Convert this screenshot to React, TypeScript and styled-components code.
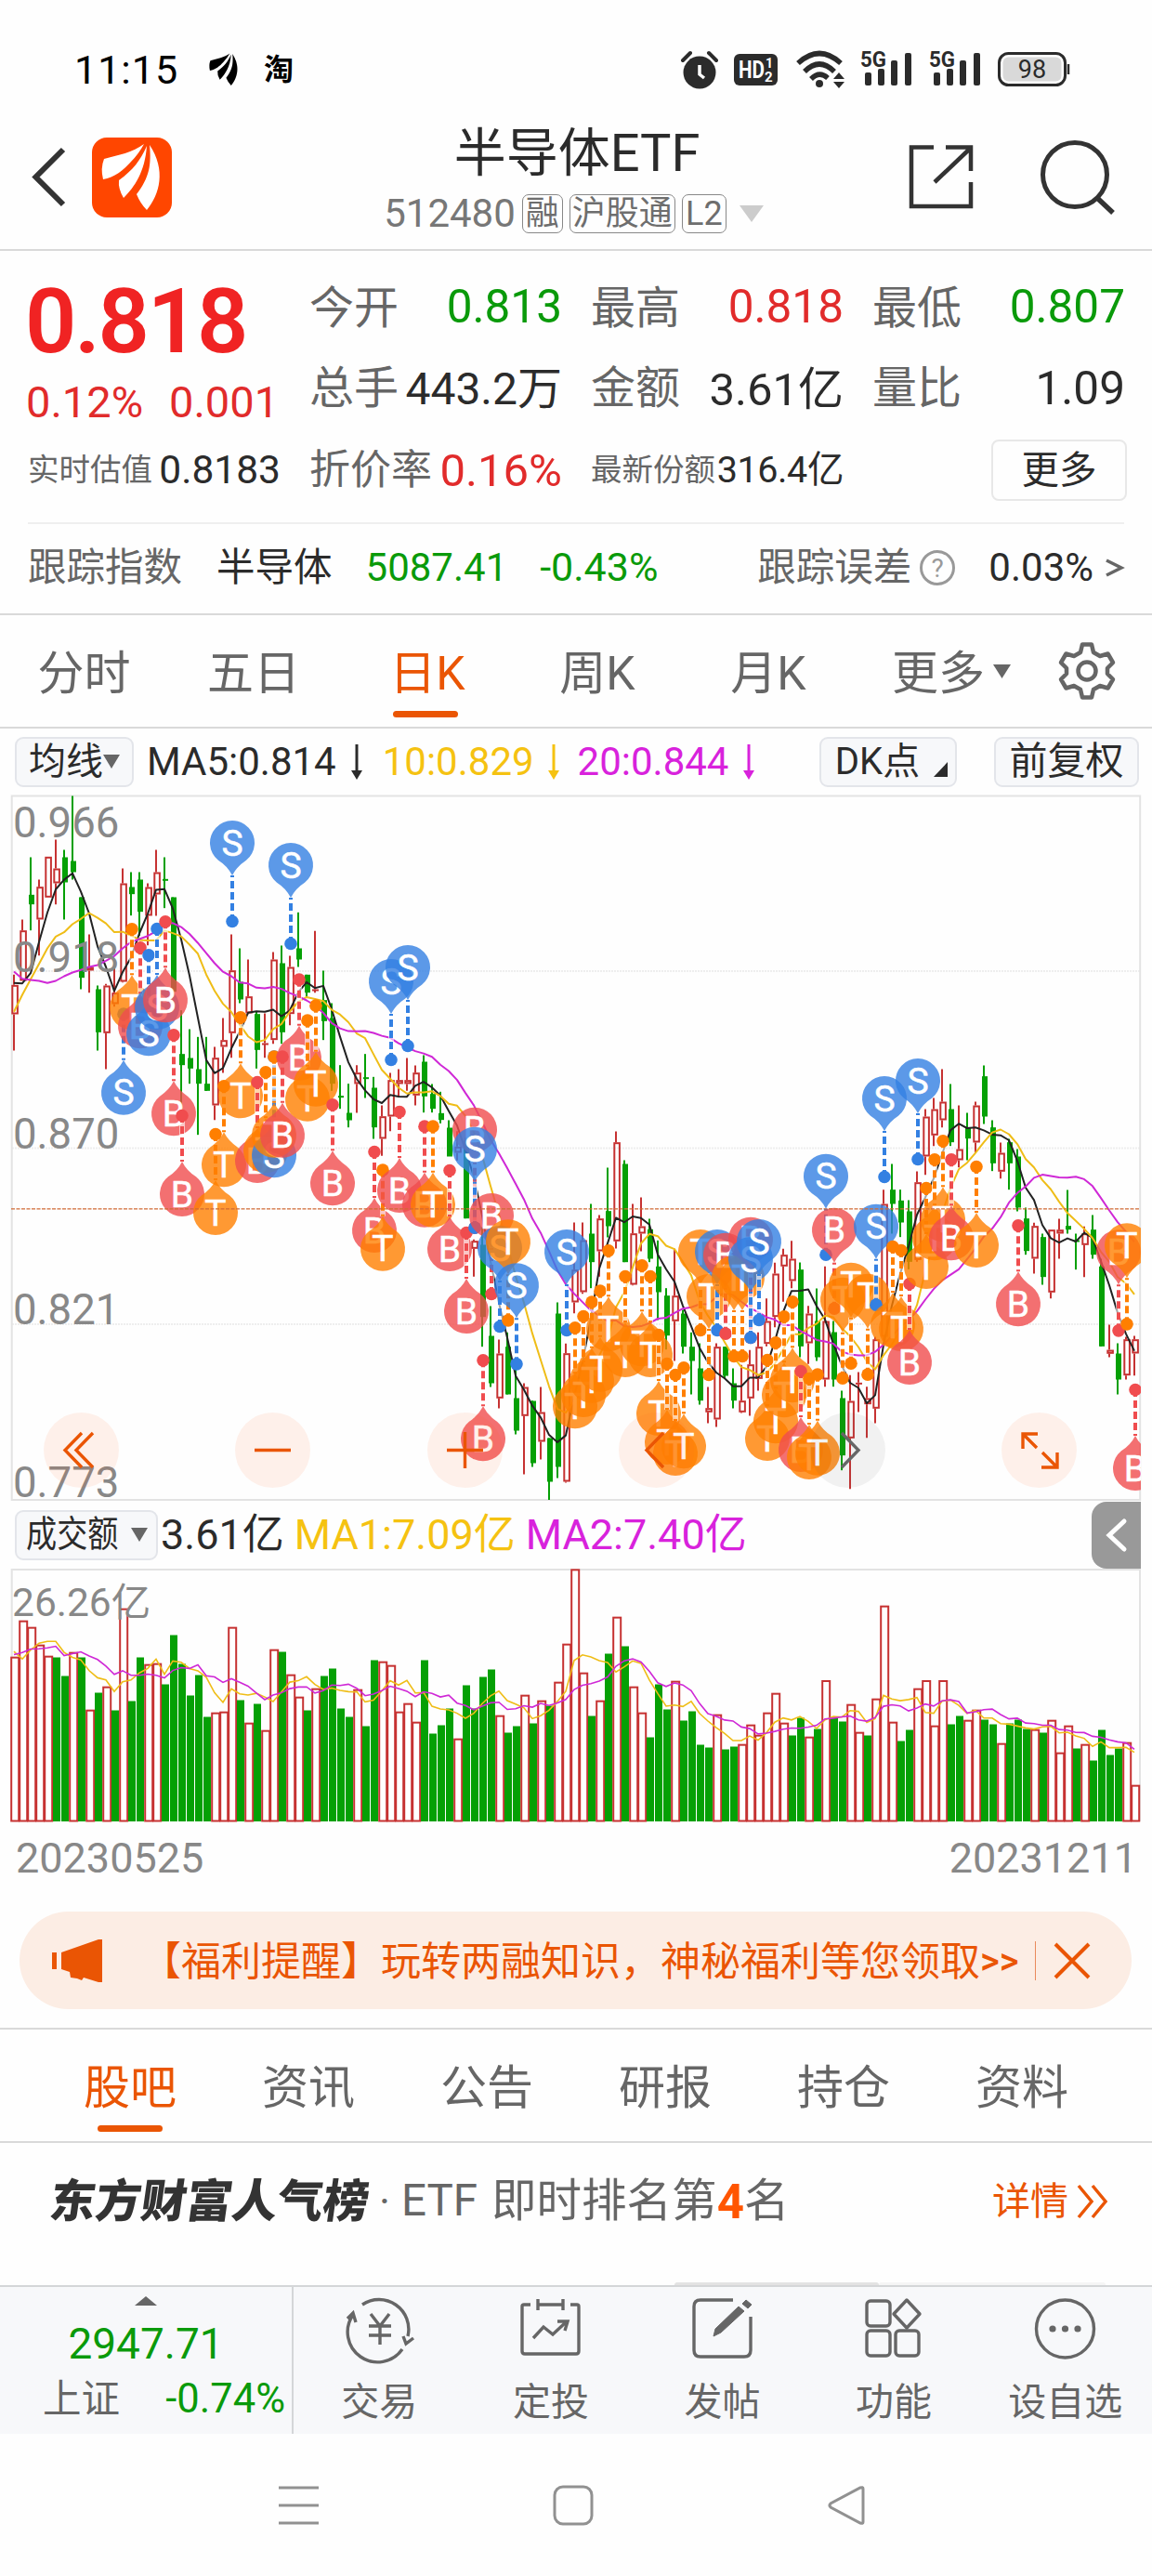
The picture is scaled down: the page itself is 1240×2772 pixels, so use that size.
import React from "react";
import styled, { createGlobalStyle, css } from "styled-components";

const C = {
  ink: "#2b2b2b",
  gray: "#666",
  axis: "#888",
  red: "#e12b2b",
  green: "#0a9a0a",
  orange: "#ea5504",
  yellow: "#f5c211",
  purple: "#d822dc",
  line: "#d9d9d9",
};

const Global = createGlobalStyle`
  * { box-sizing: border-box; }
  body { margin: 0; background: #fff; }
`;

const Screen = styled.div`
  width: 1240px;
  height: 2772px;
  overflow: hidden;
  display: flex;
  flex-direction: column;
  background: #fefefe;
  color: ${C.ink};
  font-family: Roboto, "Noto Sans CJK SC", sans-serif;
  white-space: nowrap;
  svg { display: block; flex: none; overflow: visible; }
  svg text { font-family: Roboto, "Noto Sans CJK SC", sans-serif; }
`;

const Txt = styled.span<{ s: number; c?: string; w?: number; dy?: number; ml?: number; ls?: number }>`
  font-size: ${(p) => p.s}px;
  line-height: 1;
  color: ${(p) => p.c ?? C.ink};
  font-weight: ${(p) => p.w ?? 400};
  margin-left: ${(p) => p.ml ?? 0}px;
  padding-top: ${(p) => p.dy ?? 0}px;
  letter-spacing: ${(p) => p.ls ?? 0}px;
`;

/* ---------- status bar ---------- */

const StatusBar = styled.div`
  height: 110px;
  padding: 40px 88px 0 80px;
  display: flex;
  align-items: center;
`;
const Push = styled.div`flex: 1;`;

const Feather = ({ color }: { color: string }) => (
  <g fill={color}>
    <path d="M56 8C44 17 28 20 13 24Q9 34 12 46C24 44 34 36 42 27Q50 19 56 8Z" />
    <path d="M59 10C52 26 44 36 29 47Q28 56 34 66C46 54 57 38 59 10Z" />
    <path d="M62 9C64 30 62 44 48 62Q52 72 59 79C73 62 80 36 62 9Z" />
  </g>
);

const Signal = () => (
  <svg width="58" height="44" viewBox="0 0 58 44">
    <text x="0" y="19" fontSize="24" fontWeight="700" fill={C.ink} textLength="28" lengthAdjust="spacingAndGlyphs">5G</text>
    <g fill={C.ink}>
      <rect x="5" y="25" width="7" height="14" rx="2" />
      <rect x="19" y="21" width="7" height="18" rx="2" />
      <rect x="33" y="12" width="7" height="27" rx="2" />
      <rect x="48" y="4" width="7" height="35" rx="2" />
    </g>
  </svg>
);

const StatusIcons = styled.div`
  display: flex;
  align-items: center;
  svg + svg { margin-left: 16px; }
  svg:nth-of-type(3) { margin-left: 19px; }
`;

/* ---------- header ---------- */

const Header = styled.div`
  height: 160px;
  border-bottom: 2px solid ${C.line};
  display: flex;
  align-items: flex-start;
  padding: 0 36px 0 34px;
`;
const HeaderSide = styled.div<{ right?: boolean }>`
  width: 230px;
  padding-top: 37px;
  display: flex;
  gap: ${(p) => (p.right ? 70 : 25)}px;
  justify-content: ${(p) => (p.right ? "flex-end" : "flex-start")};
`;
const TitleBox = styled.div`
  flex: 1;
  display: flex;
  flex-direction: column;
  align-items: center;
  padding: 27px 0 0 4px;
`;
const CodeRow = styled.div`
  display: flex;
  align-items: center;
  gap: 7px;
  margin: 15px 0 0 -2px;
  height: 44px;
`;
const Tag = styled.span<{ w: number }>`
  width: ${(p) => p.w}px;
  height: 42px;
  border: 1.5px solid #888;
  border-radius: 7px;
  display: flex;
  align-items: center;
  justify-content: center;
  font-size: 36px;
  line-height: 1;
  color: #6e6e6e;
`;

/* ---------- quote ---------- */

const Quote = styled.div`
  height: 292px;
  padding: 0 30px;
  display: grid;
  grid-template-columns: 272px repeat(3, 272px);
  column-gap: 31px;
`;
const QuoteCol = styled.div`
  padding-top: 16px;
  display: flex;
  flex-direction: column;
`;
const Cell = styled.div`
  height: 88px;
  display: flex;
  align-items: center;
  justify-content: space-between;
`;
const PriceBlock = styled.div`
  height: 176px;
  margin-left: -3px;
  display: flex;
  flex-direction: column;
  justify-content: flex-start;
`;
const Row = styled.div`
  display: flex;
  align-items: center;
`;
const MoreButton = styled.div`
  width: 146px;
  height: 66px;
  margin: 0 -2px 0 auto;
  border: 2px solid #e8e8e8;
  border-radius: 8px;
  display: flex;
  align-items: center;
  justify-content: center;
`;
const TrackRow = styled.div`
  height: 98px;
  margin: 0 30px;
  padding-bottom: 3px;
  border-top: 2px solid #efefef;
  display: flex;
  align-items: center;
`;

/* ---------- period tabs ---------- */

const TabBar = styled.div<{ h: number }>`
  height: ${(p) => p.h}px;
  border-top: 2px solid ${C.line};
  border-bottom: 2px solid ${C.line};
  display: flex;
`;
const Tab = styled.div<{ w: number; on?: boolean; bar?: number }>`
  width: ${(p) => p.w}px;
  display: flex;
  flex-direction: column;
  align-items: center;
  justify-content: flex-end;
  padding-bottom: 10px;
  font-size: 50px;
  line-height: 50px;
  color: ${(p) => (p.on ? C.orange : C.gray)};
  &::after {
    content: "";
    width: 70px;
    height: 7px;
    margin-top: 15px;
    border-radius: 4px;
    background: ${(p) => (p.on ? C.orange : "transparent")};
    ${(p) => p.bar && css`margin-right: ${p.bar}px;`}
  }
`;
const TabTools = styled(Row)`
  margin-left: -28px;
  gap: 50px;
`;

/* ---------- indicator rows ---------- */

const IndicatorRow = styled.div<{ h: number }>`
  height: ${(p) => p.h}px;
  padding: 0 14px 0 16px;
  display: flex;
  align-items: center;
`;
const Chip = styled.div<{ w: number; pl?: number; mr?: number }>`
  width: ${(p) => p.w}px;
  height: 54px;
  flex: none;
  padding-left: ${(p) => p.pl ?? 0}px;
  margin-right: ${(p) => p.mr ?? 0}px;
  border: 2px solid #e3e5ea;
  border-radius: 9px;
  background: #f7f8fa;
  display: flex;
  align-items: center;
  justify-content: center;
`;
const Narrow = styled.span`
  display: inline-block;
  width: 100px;
  margin-right: 13px;
  font-size: 39px;
  line-height: 1;
  transform: scaleX(0.85);
  transform-origin: left center;
`;
const Down = ({ color = C.gray, w = 18 }: { color?: string; w?: number }) => (
  <svg width={w} height="15" viewBox="0 0 18 15" preserveAspectRatio="none"><path d="M0 0H18L9 15Z" fill={color} /></svg>
);
const ArrowSvg = styled.svg<{ ml: number; mr: number }>`
  margin: 0 ${(p) => p.mr}px 0 ${(p) => p.ml}px;
`;
const ArrowDown = ({ color, ml, mr }: { color: string; ml: number; mr: number }) => (
  <ArrowSvg width="14" height="38" viewBox="0 0 14 38" ml={ml} mr={mr}>
    <path d="M7 0V34" stroke={color} strokeWidth="3" />
    <path d="M1 28H13L7 38Z" fill={color} />
  </ArrowSvg>
);

const CollapseTab = styled.div`
  width: 53px;
  height: 72px;
  margin-left: auto;
  margin-right: -2px;
  border-radius: 16px 0 0 16px;
  background: #999;
  display: flex;
  align-items: center;
  justify-content: center;
`;

/* ---------- price chart ---------- */

type Candle = ["r" | "g", number, number, number, number];
// colour, high, low, body top, body bottom (thirds of a pixel)
const candles: Candle[] = [
  ["r",625,870,658,753],["r",447,645,482,645],["g",246,482,367,398],["r",318,563,341,447],["r",244,376,244,376],
  ["r",189,398,282,330],["g",222,447,246,327],["g",48,318,258,294],["g",375,672,375,635],["r",495,683,600,612],
  ["g",660,870,672,811],["r",655,930,660,814],["r",600,728,683,720],["r",282,650,330,648],["g",294,434,342,365],
  ["g",294,500,318,422],["r",330,530,342,435],["r",222,435,294,366],["g",246,410,316,320],["g",375,700,375,680],
  ["g",740,1080,881,917],["g",801,977,894,928],["g",826,1142,930,977],["g",826,1000,977,1000],["r",858,1094,893,1047],
  ["r",765,942,836,858],["r",495,893,611,814],["g",540,717,648,705],["r",576,752,695,750],["g",745,928,752,868],
  ["r",750,893,846,850],["r",552,848,576,836],["g",531,848,588,811],["r",564,788,600,752],["g",424,600,540,576],
  ["g",625,700,625,683],["r",484,683,672,676],["g",612,836,707,775],["g",717,1000,765,977],["g",917,1058,1016,1020],
  ["g",977,1118,1071,1095],["r",917,1071,941,978],["g",881,1023,956,961],["g",955,1155,990,1118],["r",1047,1210,1082,1155],
  ["r",942,1130,965,1083],["r",930,1020,965,978],["r",894,1000,965,978],["r",918,1047,941,1015],["g",885,1070,906,1018],
  ["g",978,1070,1010,1058],["g",1003,1105,1072,1094],["g",1095,1210,1119,1212],["r",1130,1225,1180,1200],["g",1150,1412,1160,1412],
  ["r",1480,1600,1484,1510],["g",1440,1826,1497,1730],["g",1695,1956,1791,1944],["r",1803,2025,1848,1993],["g",1780,1980,1826,1980],
  ["g",1895,2109,1992,2097],["r",1944,2238,1956,2050],["g",2000,2214,2001,2202],["r",1956,2190,2037,2133],["g",2121,2322,2121,2262],
  ["g",1683,2250,1719,2214],["r",1816,2265,1847,2262],["r",1425,1718,1577,1683],["r",1425,1655,1482,1650],["g",1365,1637,1461,1553],
  ["r",1401,1600,1412,1518],["g",1248,1473,1388,1437],["r",1131,1509,1166,1486],["g",1224,1553,1236,1553],["r",1365,1628,1460,1626],
  ["r",1344,1518,1437,1461],["g",1413,1553,1447,1542],["g",1483,1740,1567,1650],["g",1637,1835,1661,1790],["r",1510,1872,1661,1744],
  ["g",1707,1848,1719,1826],["g",1780,1980,1826,1872],["g",1815,2013,1896,2000],["r",1956,2073,2024,2038],["r",1815,2085,1826,2061],
  ["g",1826,1930,1826,1920],["g",1896,2025,1944,2000],["r",1885,2040,2000,2038],["r",1837,2049,1883,1993],["r",1780,1968,1826,1930],
  ["r",1670,1825,1743,1817],["r",1555,1763,1590,1730],["r",1510,1681,1529,1567],["r",1484,1637,1542,1614],["g",1554,1860,1577,1825],
  ["r",1694,1882,1719,1815],["g",1638,1872,1743,1860],["r",1567,1955,1743,1932],["g",1743,1955,1779,1932],["g",1968,2225,1992,2177],
  ["r",1918,2285,2001,2122],["r",1908,2037,1942,1947],["r",1955,2120,1992,2012],["r",1794,2073,1802,2026],["r",1319,1805,1365,1794],
  ["g",1236,1461,1319,1365],["g",1319,1472,1354,1425],["g",1353,1576,1389,1552],["r",1260,1552,1295,1546],["r",1059,1271,1083,1212],
  ["r",1023,1178,1059,1144],["r",930,1118,1035,1095],["g",978,1178,1059,1166],["r",1047,1247,1188,1224],["g",1071,1224,1118,1154],
  ["r",1035,1200,1047,1167],["g",918,1107,953,1083],["g",1095,1259,1118,1234],["r",1167,1283,1200,1261],["g",1155,1319,1166,1234],
  ["g",1188,1389,1212,1377],["g",1377,1529,1412,1517],["r",1426,1590,1436,1542],["g",1461,1626,1472,1601],["r",1448,1670,1448,1651],
  ["r",1413,1542,1448,1461],["g",1320,1461,1436,1448],["g",1461,1577,1482,1487],["r",1438,1601,1460,1498],["g",1401,1542,1448,1529],
  ["g",1542,1825,1567,1825],["r",1755,1860,1836,1849],["g",1815,1980,1848,1932],["r",1794,1932,1802,1919],["r",1791,1919,1802,1848],
];

type Mark = ["S" | "B" | "T", number, number, 1 | -1, number?];
// letter, day, dot height, side of the pin, extra distance when two share a day
const marks: Mark[] = [
  ["S",13,752,1],["T",14,478,1],["B",15,538,1],["S",16,562,1],["S",17,477,1],["B",18,454,1],["B",19,820,1],["B",20,1080,1],
  ["T",24,1140,1],["T",25,985,1],["S",26,453,-1],["T",27,763,1],["B",29,972,1],["T",30,940,1],["S",31,890,1,65],["T",31,890,1],
  ["B",32,890,1],["S",33,525,-1],["B",34,641,1],["T",35,773,1],["T",36,725,1],["B",38,1045,1],["B",43,1197,1],["T",44,1256,1],
  ["S",45,900,-1],["B",46,1068,1],["S",47,855,-1],["B",49,1115,1],["T",50,1115,1],["B",52,1257,1],["B",54,1458,1],
  ["B",55,1442,-1,63],["S",55,1442,-1],["B",56,1870,1],["B",57,1656,-1],["S",58,1761,-1],["T",59,1741,-1],["S",60,1882,-1],
  ["S",66,1773,-1],["T",67,1765,1],["T",68,1728,1],["T",69,1682,1],["T",70,1646,1],["T",71,1516,1],["T",73,1599,1],["T",75,1564,1],
  ["T",76,1599,1],["T",77,1788,1],["T",78,1881,1],["T",79,1917,1],["T",80,1894,1],["T",82,1773,-1],["T",83,1917,-1],["S",84,1773,-1],
  ["B",85,1784,-1],["T",86,1857,-1],["T",87,1857,-1],["B",88,1797,-1,64],["S",88,1797,-1],["S",89,1740,-1],["T",90,1869,1],
  ["T",91,1813,1],["T",92,1729,1],["T",93,1681,1],["B",94,1905,1],["T",95,1929,1],["T",96,1916,1],["S",97,1529,-1],["B",98,1703,-1],
  ["T",99,1928,-1],["T",100,1880,-1],["T",102,1916,-1],["S",103,1691,-1],["S",104,1278,-1],["T",105,1503,1],["T",106,1515,1],
  ["B",107,1623,1],["S",108,1221,-1],["T",109,1314,1],["T",110,1222,1],["T",111,1162,1],["B",112,1222,1],["T",115,1245,1],
  ["B",120,1435,1],["B",132,1774,-1],["T",133,1753,-1],["B",134,1965,1],
];
const markColor = { S: "#3380e2", B: "#f04c4e", T: "#ff7f00" };

const toX = (i: number) => 16 + 9 * i;
const toY = (v: number) => v / 3 - 14.5;

/** Moving average whose first points, before the window is full, are given. */
const average = (values: number[], n: number, lead: number[]) =>
  values.map((_, i) =>
    i < lead.length ? lead[i] : values.slice(i - n + 1, i + 1).reduce((a, b) => a + b, 0) / n
  );
const path = (vals: number[], f: (v: number) => number) =>
  vals.map((v, i) => `${i ? "L" : "M"}${toX(i) - 1} ${f(v).toFixed(1)}`).join("");

const closes = candles.map((c) => (c[0] === "r" ? c[3] : c[4]));
const ma5 = average(closes, 5, [652, 653, 620, 520]);
const ma10 = average(closes, 10, [745, 690, 640, 590, 540, 502, 488, 462, 445]);
const ma20 = average(closes, 20, [615,638,642,645,652,645,630,618,610,600,594,580,565,540,520,510,500,485,462]);

const CandleShape = ({ c, i }: { c: Candle; i: number }) => {
  const [k, hi, lo, top, bot] = c;
  const x = toX(i);
  const t = toY(top);
  const b = toY(bot);
  if (k === "g")
    return (
      <g fill="#05a005">
        <rect x={x - 2} y={toY(hi)} width="2" height={toY(lo) - toY(hi)} />
        <rect x={x - 3} y={t} width="6" height={Math.max(2, b - t)} />
      </g>
    );
  return (
    <g stroke="#c63232" strokeWidth="2" fill="none">
      <path d={`M${x - 1} ${toY(hi)}V${t}M${x - 1} ${b}V${toY(lo)}`} />
      {bot - top < 7 ? <path d={`M${x - 4} ${t + 1}H${x + 3}`} /> : <rect x={x - 2.7} y={t + 1} width="5.6" height={Math.max(1, b - t - 2)} />}
    </g>
  );
};

const MarkShape = ({ m }: { m: Mark }) => {
  const [k, day, dot, dir, extra = 0] = m;
  const x = toX(day);
  const y = toY(dot);
  const cy = y + dir * (84.5 + extra / 3);
  const tip = cy - dir * 35;
  const col = markColor[k];
  return (
    <g>
      <path d={`M${x} ${tip}V${y}`} stroke="#fff" strokeOpacity="0.6" strokeWidth="6" />
      <path d={`M${x} ${tip}V${y}`} stroke={col} strokeWidth="4" strokeDasharray="8 4" strokeDashoffset="6" />
      <circle cx={x} cy={y} r="6.8" fill={col} />
      <path
        transform={`translate(${x} ${cy}) scale(1 ${-dir})`}
        d="M-15 18.7Q-5 25 0 35Q5 25 15 18.7A24 24 0 1 0 -15 18.7Z"
        fill={col}
        fillOpacity="0.8"
      />
      <text x={x} y={cy + 13.8} fontSize="39" fill="#fff" stroke="#fff" strokeWidth="0.5" textAnchor="middle">{k}</text>
    </g>
  );
};

const ChartBox = styled.div`
  position: relative;
  height: 760px;
`;
const ToolButtons = styled.div`
  position: absolute;
  left: 47px;
  bottom: 14px;
  display: flex;
  gap: 125.3px;
`;
const ToolButton = styled.div<{ off?: boolean }>`
  width: 81px;
  height: 81px;
  border-radius: 50%;
  background: ${(p) => (p.off ? "rgba(90,90,90,.08)" : "rgba(255,96,30,.09)")};
  svg { fill: none; stroke: ${(p) => (p.off ? "#666" : C.orange)}; stroke-width: 3.4; }
`;
const toolIcons = [
  "M41 22L23 40.5L41 59M53 22L35 40.5L53 59",
  "M21 40.5H60",
  "M21 40.5H60M40.5 21V60",
  "M48 22L30 40.5L48 59",
  "M34 22L52 40.5L34 59",
  "M39 23H23V39M23 23L38 38M43 59H60V43M60 59L44 43",
];

const PriceChart = () => (
  <ChartBox>
    <svg width="1240" height="760" viewBox="0 0 1240 760">
      <defs><clipPath id="plot"><rect x="12" y="1" width="1216" height="758" /></clipPath></defs>
      <g stroke="#eee" strokeWidth="2" strokeDasharray="2 1">
        <path d="M13 190H1227M13 380.500H1227M13 570H1227" />
      </g>
      <rect x="12.700" y="1.500" width="1214.500" height="757.500" fill="none" stroke="#e3e3e3" strokeWidth="2" />
      <g clipPath="url(#plot)">
        {candles.map((c, i) => <CandleShape key={i} c={c} i={i} />)}
        <g fill="none" strokeWidth="2" strokeLinejoin="round">
          <path d={path(ma5, toY)} stroke="#222" />
          <path d={path(ma10, toY)} stroke="#efbd17" />
          <path d={path(ma20, toY)} stroke="#cf28d6" />
        </g>
        <g fill={C.axis} fontSize="45.5">
          <text x="14" y="45.5">0.966</text>
          <text x="14" y="190.500">0.918</text>
          <text x="14" y="381">0.870</text>
          <text x="14" y="570">0.821</text>
          <text x="14" y="756">0.773</text>
        </g>
        {marks.map((m, i) => <MarkShape key={i} m={m} />)}
        <path d="M12 445.800H1227" stroke="#cf6a35" strokeWidth="1.300" strokeDasharray="4 1.500" />
      </g>
    </svg>
    <ToolButtons>
      {toolIcons.map((d, i) => (
        <ToolButton key={i} off={i === 4}><svg width="81" height="81"><path d={d} /></svg></ToolButton>
      ))}
    </ToolButtons>
  </ChartBox>
);

/* ---------- volume chart ---------- */

const volumes = (
  "r518 r401 r422 r479 r515 g519 g579 r503 g519 r689 g633 r614 g690 r362 g660 g519 r542 r539 g606 g447 g540 g642 g576 g711 r698 " +
  "r695 r422 g657 r731 g669 r755 r494 g501 r575 r647 g690 r620 g579 g555 g684 g711 r623 g741 g528 r533 r545 r695 r668 r728 g528 " +
  "g765 g738 g684 r782 g609 g684 g582 g558 r707 g762 g741 r641 g732 r659 g675 r599 r476 r235 r569 g708 r659 g507 r389 g483 r614 " +
  "r698 g777 g606 g687 r596 g723 g693 g801 g810 r704 g816 g807 r800 r737 r770 r698 r635 r731 g771 g714 r776 g750 r594 g714 g726 " +
  "r671 r761 g771 r653 r353 r728 g789 g753 r620 r594 r740 r594 g735 g708 r722 r689 g720 g735 r797 g732 g720 g750 r752 g762 r722 " +
  "r827 r740 g813 r800 g852 g753 g834 g813 r794 r932"
).split(" ").map((s) => ({ up: s[0] === "r", top: Number(s.slice(1)) }));
const volTops = volumes.map((v) => v.top);
const volY = (v: number) => (v - 234) / 3 + 0.5;

const VolumeChart = () => (
  <svg width="1240" height="274" viewBox="0 0 1240 274">
    <path d="M12.700 272V1H1227V272" fill="none" stroke="#e3e3e3" strokeWidth="2" />
    {volumes.map((v, i) => {
      const x = toX(i);
      const y = volY(v.top);
      return v.up ? (
        <rect key={i} x={x - 3.8} y={y + 0.5} width="8" height={271 - y} fill="#fff" stroke="#c63232" strokeWidth="2" />
      ) : (
        <rect key={i} x={x - 4} y={y} width="8" height={272 - y} fill="#05a005" />
      );
    })}
    <g fill="none" strokeWidth="1.600">
      <path d={path(average(volTops, 5, [500, 524, 495, 473]), volY)} stroke="#efbd17" />
      <path d={path(average(volTops, 10, [510, 503, 492, 491, 488, 483, 513, 507, 501]), volY)} stroke="#cf28d6" />
    </g>
    <text x="13" y="51" fontSize="42.5" fill={C.axis}>26.26亿</text>
  </svg>
);

const Dates = styled.div`
  height: 84px;
  padding: 15px 16px 0 17px;
  display: flex;
  justify-content: space-between;
`;

/* ---------- banner, content tabs, ranking ---------- */

const Banner = styled.div`
  height: 105px;
  margin: 11px 22px 20px 21px;
  padding: 0 44px 0 35px;
  border-radius: 53px;
  background: #fcede4;
  display: flex;
  align-items: center;
`;
const BannerLine = styled.i`
  width: 2px;
  height: 42px;
  margin: 0 20px 0 17px;
  background: #e98a5c;
`;
const ContentTabs = styled(TabBar)`
  padding: 0 43px 0 44px;
`;
const RankRow = styled.div`
  height: 128px;
  padding: 0 46px 2px 54px;
  display: flex;
  align-items: center;
`;
const RankTitle = styled.span`
  font-size: 49px;
  line-height: 1;
  font-weight: 900;
  color: #333;
  transform: skewX(-8deg);
`;
const Peek = styled.div`
  height: 25px;
  padding: 22px 0 0 726px;
  display: flex;
  align-items: flex-start;
`;
const PeekPill = styled.i<{ w: number; c: string }>`
  width: ${(p) => p.w}px;
  height: 3px;
  border-radius: 6px 6px 0 0;
  background: ${(p) => p.c};
`;

/* ---------- bottom bar ---------- */

const BottomBar = styled.div`
  height: 160px;
  border-top: 2px solid #d4d6d8;
  background: #f7f8fa;
  display: flex;
`;
const IndexBox = styled.div`
  width: 316px;
  border-right: 2px solid #d4d6d8;
  display: flex;
  flex-direction: column;
  align-items: center;
  padding: 10px 0 0;
`;
const IndexRow = styled.div`
  width: 100%;
  padding: 0 7px 0 46px;
  display: flex;
  justify-content: space-between;
  align-items: center;
  margin-top: 15px;
`;
const Action = styled.div`
  width: 184.6px;
  display: flex;
  flex-direction: column;
  align-items: center;
  padding-top: 7px;
  gap: 21px;
  font-size: 41px;
  line-height: 41px;
  color: ${C.gray};
  svg { fill: none; stroke: ${C.gray}; stroke-width: 3.4; }
`;
const NavBar = styled.div`
  flex: 1;
  padding: 54px 307px 0 300px;
  display: flex;
  justify-content: space-between;
  svg { fill: none; stroke: #919191; stroke-width: 3; }
`;

const dot = (x: number) => <circle cx={x} cy="38" r="3.600" fill={C.gray} stroke="none" />;
const actions: [string, React.ReactNode][] = [
  ["交易", <>
    <path d="M20 12A32 32 0 0 1 69 46M63 60A32 32 0 0 1 10 23M4 27L10 21L13 31M64 46L67 54L75 48" />
    <path d="M29 22L39 35L49 22M39 35V55M27 35H51M27 45H51" />
  </>],
  ["定投", <>
    <path d="M17 12H10Q8 12 8 14V62Q8 65 11 65H66Q69 65 69 62V14Q69 12 67 12H60M25 12H52M25 6V18M52 6V18" />
    <path d="M20 48L31 36L41 44L55 31M46 30H57L54 40" />
  </>],
  ["发帖", <>
    <path d="M50 7H15Q8 7 8 14V61Q8 68 15 68H62Q69 68 69 61V25" />
    <path d="M29 46L31 38L56 14L62 19L37 42ZM60 11L64 7L70 12L66 16Z" fill={C.gray} strokeWidth="1" />
  </>],
  ["功能", <>
    <rect x="9" y="8" width="25" height="27" rx="4" />
    <rect x="9" y="40" width="25" height="27" rx="4" />
    <rect x="40" y="40" width="25" height="27" rx="4" />
    <path d="M52 7L66 22L52 37L38 22Z" strokeLinejoin="round" />
  </>],
  ["设自选", <><circle cx="38.500" cy="38" r="31" />{dot(25)}{dot(38.5)}{dot(52)}</>],
];

const stats: [string, string, string, number][][] = [
  [["今开", "0.813", C.green, 49.5], ["总手", "443.2万", C.ink, 48]],
  [["最高", "0.818", C.red, 49.5], ["金额", "3.61亿", C.ink, 49]],
  [["最低", "0.807", C.green, 49.5], ["量比", "1.09", C.ink, 49.5]],
];
const thirdRow = [
  <Cell key="a"><Txt s={44} c={C.gray}>折价率</Txt><Txt s={49} c={C.red}>0.16%</Txt></Cell>,
  <Cell key="b"><Txt s={33.5} c={C.gray}>最新份额</Txt><Txt s={39.5} ls={-0.4}>316.4亿</Txt></Cell>,
  <Cell key="c"><MoreButton><Txt s={40.5}>更多</Txt></MoreButton></Cell>,
];

const Help = styled.svg`margin: 0 35px 0 8px;`;
const Chevron = styled.svg`margin-left: 11px;`;
const StatusLogo = styled.svg`margin-left: 32px;`;
const Corner = styled.svg`margin-left: 15px;`;
const More = styled.svg`margin-left: 8px;`;

export default function App() {
  return (
    <Screen>
      <Global />
      <StatusBar>
        <Txt s={43} c="#000" ls={1}>11:15</Txt>
        <StatusLogo width="34" height="38" viewBox="8 6 70 76"><Feather color="#000" /></StatusLogo>
        <Txt s={32} c="#000" w={700} ml={26}>淘</Txt>
        <Push />
        <StatusIcons>
          <svg width="42" height="44" viewBox="0 0 42 44">
            <circle cx="21" cy="25" r="17.500" fill={C.ink} />
            <path d="M3 12L11 4M39 12L31 4" stroke={C.ink} strokeWidth="4" strokeLinecap="round" />
            <path d="M21 17V27L26 31" stroke="#fff" strokeWidth="3.500" fill="none" />
          </svg>
          <svg width="47" height="34" viewBox="0 0 47 34">
            <rect width="47" height="34" rx="6" fill={C.ink} />
            <text x="5" y="26" fontSize="25" fontWeight="700" fill="#fff" textLength="28" lengthAdjust="spacingAndGlyphs">HD</text>
            <text x="34" y="15" fontSize="14" fontWeight="700" fill="#fff">1</text>
            <text x="33" y="30" fontSize="15" fontWeight="700" fill="#fff">2</text>
          </svg>
          <svg width="54" height="44" viewBox="0 0 54 44">
            <g stroke={C.ink} strokeWidth="5.500" fill="none">
              <path d="M3 15Q26 -6 49 15M10 24Q26 8 42 24M17 32Q26 23 35 31" />
            </g>
            <circle cx="26" cy="37" r="4" fill={C.ink} />
            <path d="M41 32L47 25L53 32ZM41 35H53L47 42Z" fill={C.ink} />
          </svg>
          <Signal />
          <Signal />
          <svg width="78" height="38" viewBox="0 0 78 38">
            <rect x="1.500" y="1.500" width="71" height="34" rx="10" fill="#fff" stroke={C.ink} strokeWidth="3" />
            <rect x="5.500" y="5.500" width="63" height="26" rx="6" fill="#d9d9d9" />
            <path d="M76 13V24" stroke={C.ink} strokeWidth="2.500" />
            <text x="37" y="28" fontSize="27" textAnchor="middle" fill={C.ink}>98</text>
          </svg>
        </StatusIcons>
      </StatusBar>

      <Header>
        <HeaderSide>
          <svg width="40" height="86" viewBox="0 0 40 86"><path d="M34 14L4.500 43.500L34 73" fill="none" stroke="#333" strokeWidth="6" /></svg>
          <svg width="86" height="88" viewBox="0 0 86 88">
            <rect y="1" width="86" height="86" rx="16" fill="#ff4600" />
            <Feather color="#fff" />
          </svg>
        </HeaderSide>
        <TitleBox>
          <Txt s={56}>半导体ETF</Txt>
          <CodeRow>
            <Txt s={42} c="#777">512480</Txt>
            <Tag w={44}>融</Tag>
            <Tag w={114}>沪股通</Tag>
            <Tag w={48}>L2</Tag>
            <svg width="38" height="18" viewBox="0 0 38 18"><path d="M7 0H33L20 18Z" fill="#ccc" /></svg>
          </CodeRow>
        </TitleBox>
        <HeaderSide right>
          <svg width="70" height="86" viewBox="0 0 70 86">
            <path d="M27 12.500H3V76H67V50M67 38V12.500H40M66 14L28 50" transform="translate(0 -1)" fill="none" stroke="#333" strokeWidth="4.500" />
          </svg>
          <svg width="86" height="86" viewBox="0 0 86 86">
            <circle cx="39" cy="41" r="34.500" fill="none" stroke="#333" strokeWidth="5" />
            <path d="M63 66L80 82" stroke="#333" strokeWidth="5.500" />
          </svg>
        </HeaderSide>
      </Header>

      <Quote>
        <QuoteCol>
          <PriceBlock>
            <Txt s={97} c="#f02323" w={600} dy={12} ls={-2.2}>0.818</Txt>
            <Row>
              <Txt s={47} c={C.red} dy={14} ml={1}>0.12%</Txt>
              <Txt s={47} c={C.red} dy={14} ml={28}>0.001</Txt>
            </Row>
          </PriceBlock>
          <Cell><Txt s={33.5} c={C.gray}>实时估值</Txt><Txt s={42.5}>0.8183</Txt></Cell>
        </QuoteCol>
        {stats.map((col, i) => (
          <QuoteCol key={i}>
            {col.map(([label, value, color, size], j) => (
              <Cell key={label}>
                <Txt s={48} c={C.gray} dy={j ? 0 : 3}>{label}</Txt>
                <Txt s={size} c={color} dy={2}>{value}</Txt>
              </Cell>
            ))}
            {thirdRow[i]}
          </QuoteCol>
        ))}
      </Quote>
      <TrackRow>
        <Txt s={41.5} c={C.gray}>跟踪指数</Txt>
        <Txt s={41.5} ml={37}>半导体</Txt>
        <Txt s={42} ml={36} c={C.green}>5087.41</Txt>
        <Txt s={43} ml={35} c={C.green}>-0.43%</Txt>
        <Push />
        <Txt s={41.5} c={C.gray}>跟踪误差</Txt>
        <Help width="40" height="40" viewBox="0 0 40 40">
          <circle cx="20" cy="20" r="17.500" fill="none" stroke="#999" strokeWidth="3" />
          <text x="20" y="30" fontSize="28" textAnchor="middle" fill="#999">?</text>
        </Help>
        <Txt s={42}>0.03%</Txt>
        <Chevron width="22" height="20" viewBox="0 0 22 20"><path d="M3 2L19 10L3 18" fill="none" stroke={C.gray} strokeWidth="3.500" /></Chevron>
      </TrackRow>

      <TabBar h={124}>
        <Tab w={181}>分时</Tab>
        <Tab w={184}>五日</Tab>
        <Tab w={190} on bar={4}>日K</Tab>
        <Tab w={176}>周K</Tab>
        <Tab w={192}>月K</Tab>
        <Tab w={174}>更多</Tab>
        <TabTools>
          <Down w={19} />
          <svg width="64" height="64" viewBox="0 0 64 64">
            <path
              d="M27 3.500H37L39 12L46 16L54.500 13.500L60 23L54 29V35L60 41L54.500 50.500L46 48L39 52L37 60.500H27L25 52L18 48L9.500 50.500L4 41L10 35V29L4 23L9.500 13.500L18 16L25 12Z"
              fill="none" stroke={C.gray} strokeWidth="4.500" strokeLinejoin="round"
            />
            <circle cx="32" cy="32" r="9.500" fill="none" stroke={C.gray} strokeWidth="4.500" />
          </svg>
        </TabTools>
      </TabBar>

      <IndicatorRow h={71}>
        <Chip w={128}><Txt s={40}>均线</Txt><Down /></Chip>
        <Txt s={42} ml={14}>MA5:0.814</Txt>
        <ArrowDown color={C.ink} ml={15} mr={21} />
        <Txt s={42} c={C.yellow}>10:0.829</Txt>
        <ArrowDown color={C.yellow} ml={14} mr={19} />
        <Txt s={42} c={C.purple}>20:0.844</Txt>
        <ArrowDown color={C.purple} ml={15} mr={0} />
        <Push />
        <Chip w={148} pl={8} mr={40}>
          <Txt s={40}>DK点</Txt>
          <Corner width="16" height="30" viewBox="0 0 16 30"><path d="M15 15V31H0Z" fill={C.ink} /></Corner>
        </Chip>
        <Chip w={156}><Txt s={41}>前复权</Txt></Chip>
      </IndicatorRow>

      <PriceChart />

      <IndicatorRow h={73}>
        <Chip w={154}><Narrow>成交额</Narrow><Down /></Chip>
        <Txt s={45} ml={3}>3.61亿</Txt>
        <Txt s={45} ml={11} c={C.yellow}>MA1:7.09亿</Txt>
        <Txt s={45} ml={11} c={C.purple}>MA2:7.40亿</Txt>
        <CollapseTab>
          <svg width="24" height="36" viewBox="0 0 24 36"><path d="M20 3L4 18L20 33" fill="none" stroke="#fff" strokeWidth="5" strokeLinecap="round" /></svg>
        </CollapseTab>
      </IndicatorRow>
      <VolumeChart />
      <Dates><Txt s={45} c={C.axis}>20230525</Txt><Txt s={45} c={C.axis}>20231211</Txt></Dates>

      <Banner>
        <svg width="56" height="48" viewBox="0 0 56 48">
          <path d="M0 15H5V33H0ZM10 15L50 1H54V47H50L34 42L32 45L27 43L20 42L19 36L10 33Z" fill={C.orange} />
        </svg>
        <Txt s={43} c={C.orange} ml={40} dy={4}>【福利提醒】玩转两融知识，神秘福利等您领取</Txt>
        <Txt s={40} c={C.orange} w={500} dy={2}>&gt;&gt;</Txt>
        <BannerLine />
        <svg width="40" height="40" viewBox="0 0 40 40"><path d="M2 2L38 38M38 2L2 38" stroke={C.orange} strokeWidth="4" /></svg>
      </Banner>

      <ContentTabs h={124}>
        {["股吧", "资讯", "公告", "研报", "持仓", "资料"].map((t, i) => <Tab key={t} w={192} on={i === 0}>{t}</Tab>)}
      </ContentTabs>
      <RankRow>
        <RankTitle>东方财富人气榜</RankTitle>
        <Txt s={46} c={C.gray} ml={11}>·</Txt>
        <Txt s={47.5} c={C.gray} ml={12}>ETF</Txt>
        <Txt s={48.5} c={C.gray} ml={15}>即时排名第</Txt>
        <Txt s={51} c="#ff5500" w={700}>4</Txt>
        <Txt s={48.5} c={C.gray}>名</Txt>
        <Push />
        <Txt s={41} c={C.orange}>详情</Txt>
        <More width="36" height="38" viewBox="0 0 36 38"><path d="M3 2L17 19L3 36M18 2L32 19L18 36" fill="none" stroke={C.orange} strokeWidth="3.500" /></More>
      </RankRow>
      <Peek><PeekPill w={220} c="#e3e3e3" /><PeekPill w={244} c="#f5f5f5" /></Peek>

      <BottomBar>
        <IndexBox>
          <svg width="24" height="10" viewBox="0 0 24 10"><path d="M0 10L12 0L24 10Z" fill={C.gray} /></svg>
          <Txt s={46} c={C.green} dy={18}>2947.71</Txt>
          <IndexRow><Txt s={41.5} c={C.gray}>上证</Txt><Txt s={43.5} c={C.green}>-0.74%</Txt></IndexRow>
        </IndexBox>
        {actions.map(([label, icon]) => (
          <Action key={label}><svg width="77" height="76" viewBox="0 0 77 76">{icon}</svg>{label}</Action>
        ))}
      </BottomBar>
      <NavBar>
        <svg width="44" height="46" viewBox="0 0 44 46"><path d="M0 4H43M0 23H43M0 42H43" /></svg>
        <svg width="44" height="46" viewBox="0 0 44 46"><rect x="2" y="3" width="40" height="40" rx="9" /></svg>
        <svg width="44" height="46" viewBox="0 0 44 46"><path d="M40 5V41Q40 43 37 42L5 25Q3 23 5 21L37 4Q40 3 40 5Z" /></svg>
      </NavBar>
    </Screen>
  );
}
